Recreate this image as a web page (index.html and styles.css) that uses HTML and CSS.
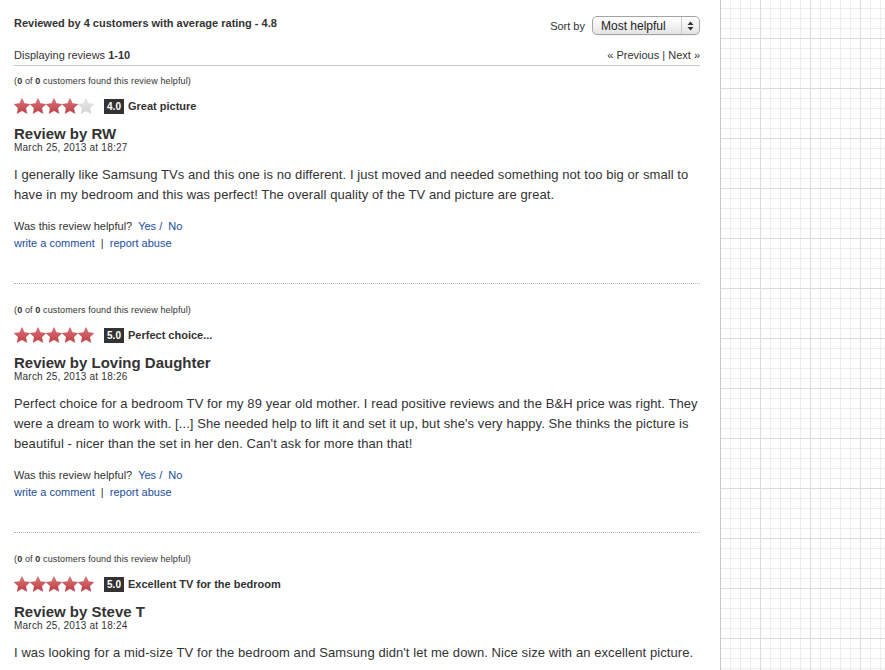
FILE: index.html
```html
<!DOCTYPE html>
<html lang="en">
<head>
<meta charset="utf-8">
<title>Customer reviews</title>
<link rel="stylesheet" href="styles.css">
</head>
<body>
<svg class="defs" width="0" height="0" aria-hidden="true">
  <defs>
    <linearGradient id="starRed" x1="0" y1="0" x2="0" y2="1">
      <stop offset="0" stop-color="#dd7479"/>
      <stop offset="1" stop-color="#bd3f48"/>
    </linearGradient>
    <linearGradient id="starGray" x1="0" y1="0" x2="0" y2="1">
      <stop offset="0" stop-color="#ececec"/>
      <stop offset="1" stop-color="#d2d2d2"/>
    </linearGradient>
    <symbol id="star" viewBox="0 0 16 16">
      <polygon points="8,0.5 10.35,5.56 15.89,6.24 11.8,10.04 12.88,15.51 8,12.8 3.12,15.51 4.2,10.04 0.11,6.24 5.65,5.56" stroke-linejoin="round"/>
    </symbol>
  </defs>
</svg>
<div class="page">
  <main class="reviews">
    <div class="summary">
      <h2 class="summary-title">Reviewed by 4 customers with average rating - 4.8</h2>
      <div class="sort">
        <span class="sort-label">Sort by</span>
        <div class="select">
          <span class="select-value">Most helpful</span>
          <span class="select-arrows">
            <svg width="7" height="10" viewBox="0 0 7 10"><polygon points="3.5,0.5 6.5,4 0.5,4" fill="#333"/><polygon points="0.5,6 6.5,6 3.5,9.5" fill="#333"/></svg>
          </span>
        </div>
      </div>
    </div>
    <div class="paging">
      <span>Displaying reviews <b>1-10</b></span>
      <span class="pager">« Previous | Next »</span>
    </div>

    <article class="review">
      <p class="helpful-count">(<b>0</b> of <b>0</b> customers found this review helpful)</p>
      <div class="rating">
        <svg class="stars" width="80" height="16" viewBox="0 0 80 16">
          <use href="#star" x="0" width="16" height="16" fill="url(#starRed)" stroke="#b8464d" stroke-width="0.4"/>
          <use href="#star" x="16" width="16" height="16" fill="url(#starRed)" stroke="#b8464d" stroke-width="0.4"/>
          <use href="#star" x="32" width="16" height="16" fill="url(#starRed)" stroke="#b8464d" stroke-width="0.4"/>
          <use href="#star" x="48" width="16" height="16" fill="url(#starRed)" stroke="#b8464d" stroke-width="0.4"/>
          <use href="#star" x="64" width="16" height="16" fill="url(#starGray)" stroke="#cfcfcf" stroke-width="0.4"/>
        </svg>
        <span class="badge">4.0</span>
        <span class="headline">Great picture</span>
      </div>
      <h3 class="review-title">Review by RW</h3>
      <div class="review-date">March 25, 2013 at 18:27</div>
      <p class="review-text">I generally like Samsung TVs and this one is no different. I just moved and needed something not too big or small to have in my bedroom and this was perfect! The overall quality of the TV and picture are great.</p>
      <div class="feedback">
        <div>Was this review helpful?&nbsp; <a href="#">Yes /</a>&nbsp; <a href="#">No</a></div>
        <div><a href="#">write a comment</a>&nbsp; | &nbsp;<a href="#">report abuse</a></div>
      </div>
    </article>

    <article class="review">
      <p class="helpful-count">(<b>0</b> of <b>0</b> customers found this review helpful)</p>
      <div class="rating">
        <svg class="stars" width="80" height="16" viewBox="0 0 80 16">
          <use href="#star" x="0" width="16" height="16" fill="url(#starRed)" stroke="#b8464d" stroke-width="0.4"/>
          <use href="#star" x="16" width="16" height="16" fill="url(#starRed)" stroke="#b8464d" stroke-width="0.4"/>
          <use href="#star" x="32" width="16" height="16" fill="url(#starRed)" stroke="#b8464d" stroke-width="0.4"/>
          <use href="#star" x="48" width="16" height="16" fill="url(#starRed)" stroke="#b8464d" stroke-width="0.4"/>
          <use href="#star" x="64" width="16" height="16" fill="url(#starRed)" stroke="#b8464d" stroke-width="0.4"/>
        </svg>
        <span class="badge">5.0</span>
        <span class="headline">Perfect choice...</span>
      </div>
      <h3 class="review-title">Review by Loving Daughter</h3>
      <div class="review-date">March 25, 2013 at 18:26</div>
      <p class="review-text">Perfect choice for a bedroom TV for my 89 year old mother. I read positive reviews and the B&amp;H price was right. They were a dream to work with. [...] She needed help to lift it and set it up, but she's very happy. She thinks the picture is beautiful - nicer than the set in her den. Can't ask for more than that!</p>
      <div class="feedback">
        <div>Was this review helpful?&nbsp; <a href="#">Yes /</a>&nbsp; <a href="#">No</a></div>
        <div><a href="#">write a comment</a>&nbsp; | &nbsp;<a href="#">report abuse</a></div>
      </div>
    </article>

    <article class="review review-last">
      <p class="helpful-count">(<b>0</b> of <b>0</b> customers found this review helpful)</p>
      <div class="rating">
        <svg class="stars" width="80" height="16" viewBox="0 0 80 16">
          <use href="#star" x="0" width="16" height="16" fill="url(#starRed)" stroke="#b8464d" stroke-width="0.4"/>
          <use href="#star" x="16" width="16" height="16" fill="url(#starRed)" stroke="#b8464d" stroke-width="0.4"/>
          <use href="#star" x="32" width="16" height="16" fill="url(#starRed)" stroke="#b8464d" stroke-width="0.4"/>
          <use href="#star" x="48" width="16" height="16" fill="url(#starRed)" stroke="#b8464d" stroke-width="0.4"/>
          <use href="#star" x="64" width="16" height="16" fill="url(#starRed)" stroke="#b8464d" stroke-width="0.4"/>
        </svg>
        <span class="badge">5.0</span>
        <span class="headline">Excellent TV for the bedroom</span>
      </div>
      <h3 class="review-title">Review by Steve T</h3>
      <div class="review-date">March 25, 2013 at 18:24</div>
      <p class="review-text">I was looking for a mid-size TV for the bedroom and Samsung didn't let me down. Nice size with an excellent picture.</p>
    </article>
  </main>
  <aside class="canvas" aria-hidden="true"></aside>
</div>
</body>
</html>
```

FILE: styles.css
```css
html, body {
  margin: 0;
  padding: 0;
}

body {
  font-family: "Liberation Sans", Arial, Helvetica, sans-serif;
  color: #333;
  background-color: #fff;
  background-image:
    linear-gradient(to right, #dcdcdc 1px, transparent 1px),
    linear-gradient(to bottom, #dcdcdc 1px, transparent 1px),
    linear-gradient(to right, #ededed 1px, transparent 1px),
    linear-gradient(to bottom, #ededed 1px, transparent 1px);
  background-size: 50px 50px, 50px 50px, 10px 10px, 10px 10px;
  background-position: 10px 38px, 10px 38px, 0 8px, 0 8px;
}

.defs {
  display: block;
  width: 0;
  height: 0;
  overflow: hidden;
}

.page {
  display: flex;
  min-height: 100vh;
}

.reviews {
  flex: none;
  width: 686px;
  padding: 0 20px 0 14px;
  background: #fff;
  border-right: 1px solid #c9c9c9;
}

.canvas {
  flex: 1;
}

/* summary header */
.summary {
  display: flex;
  justify-content: space-between;
  align-items: flex-start;
  padding-top: 16px;
  height: 19px;
}

.summary-title {
  margin: 0;
  font-size: 11px;
  line-height: 15px;
  font-weight: bold;
  color: #333;
}

.sort {
  display: flex;
  align-items: center;
  gap: 7px;
  height: 19px;
  font-size: 11px;
}

.select {
  display: flex;
  align-items: center;
  width: 106px;
  height: 17px;
  border: 1px solid #a4a4a4;
  border-radius: 5px;
  background: linear-gradient(#ffffff, #f3f3f3 50%, #e3e3e3);
  box-shadow: 0 1px 0 rgba(0, 0, 0, 0.05);
}

.select-value {
  flex: 1;
  padding-left: 8px;
  font-size: 12px;
  color: #222;
}

.select-arrows {
  display: flex;
  align-items: center;
  justify-content: center;
  box-sizing: border-box;
  width: 18px;
  height: 100%;
  border-left: 1px solid #c9c9c9;
}

.select-arrows svg {
  display: block;
}

.paging {
  display: flex;
  justify-content: space-between;
  margin-top: 12px;
  padding-bottom: 2px;
  font-size: 11px;
  line-height: 16px;
  border-bottom: 1px solid #c8c8c8;
}

.pager {
  color: #333;
}

/* review */
.review {
  padding-top: 9px;
  padding-bottom: 31px;
  border-bottom: 1px dotted #b4b4b4;
}

.review + .review {
  padding-top: 20px;
}

.review-last {
  padding-bottom: 0;
  border-bottom: none;
}

.helpful-count {
  margin: 0;
  font-size: 9px;
  line-height: 12px;
  letter-spacing: 0.12px;
}

.rating {
  display: flex;
  align-items: center;
  height: 16px;
  margin-top: 11px;
}

.stars {
  display: block;
  flex: none;
}

.badge {
  width: 20px;
  height: 15px;
  margin-left: 10px;
  background: #333;
  color: #fff;
  font-size: 10px;
  font-weight: bold;
  line-height: 15px;
  text-align: center;
}

.headline {
  margin-left: 4px;
  font-size: 11px;
  font-weight: bold;
}

.review-title {
  margin: 12px 0 0;
  font-size: 15px;
  line-height: 16px;
  font-weight: bold;
  color: #333;
}

.review-date {
  font-size: 10px;
  line-height: 12px;
  letter-spacing: 0.22px;
}

.review-text {
  margin: 11px 0 0;
  font-size: 13px;
  line-height: 20px;
  letter-spacing: 0.08px;
}

.feedback {
  margin-top: 13px;
  font-size: 11px;
  line-height: 17px;
}

.feedback a {
  color: #1b4c9c;
  text-decoration: none;
}
```
